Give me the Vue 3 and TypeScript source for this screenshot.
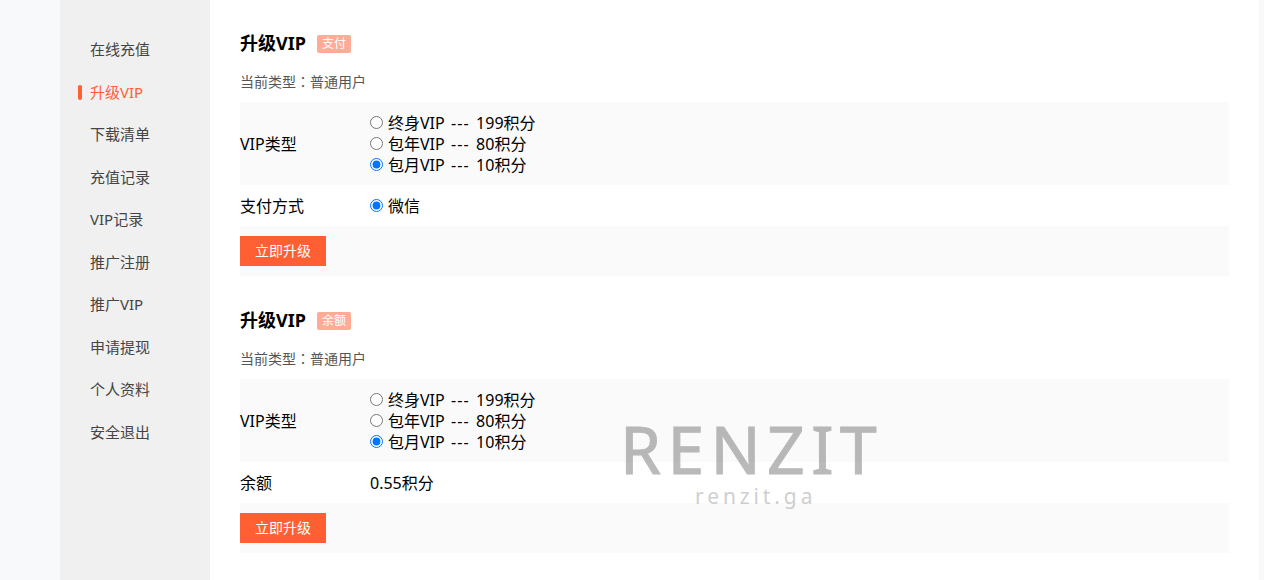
<template>
  <div class="page">
    <div class="wrap">
      <aside class="side">
        <a
          v-for="item in menu"
          :key="item"
          class="side-item"
          :class="{ active: item === current }"
        >{{ item }}</a>
      </aside>

      <main class="main">
        <section v-for="form in forms" :key="form.tag" class="block">
          <h2 class="title">升级VIP<span class="tag">{{ form.tag }}</span></h2>
          <p class="sub">当前类型<span class="colon">：</span>普通用户</p>

          <div class="row shade">
            <div class="label">VIP类型</div>
            <div class="value">
              <label v-for="plan in plans" :key="plan.name" class="radio">
                <input type="radio" :name="form.tag + 'plan'" :checked="plan.checked">{{ plan.name }} <span class="dash">---</span> {{ plan.price }}
              </label>
            </div>
          </div>

          <div class="row">
            <div class="label">{{ form.label }}</div>
            <div class="value">
              <label v-if="form.pay" class="radio">
                <input type="radio" :name="form.tag + 'pay'" checked>{{ form.pay }}
              </label>
              <span v-else>{{ form.balance }}</span>
            </div>
          </div>

          <div class="row shade action">
            <button class="btn" type="button">立即升级</button>
          </div>
        </section>
      </main>
    </div>

    <div class="mark">
      <div class="mark-big">RENZIT</div>
      <div class="mark-small">renzit.ga</div>
    </div>
  </div>
</template>

<script setup lang="ts">
const menu = ['在线充值', '升级VIP', '下载清单', '充值记录', 'VIP记录', '推广注册', '推广VIP', '申请提现', '个人资料', '安全退出']
const current = '升级VIP'

const plans = [
  { name: '终身VIP', price: '199积分', checked: false },
  { name: '包年VIP', price: '80积分', checked: false },
  { name: '包月VIP', price: '10积分', checked: true }
]

const forms = [
  { tag: '支付', label: '支付方式', pay: '微信', balance: '' },
  { tag: '余额', label: '余额', pay: '', balance: '0.55积分' }
]
</script>

<style>
html,
body {
  background: #f8f9fb;
}
</style>

<style scoped>
.page {
  position: relative;
  height: 580px;
  overflow: hidden;
  font-family: "Noto Sans", "Noto Sans CJK SC", sans-serif;
  color: #000;
}

.wrap {
  display: flex;
  width: 1199px;
  height: 580px;
  margin-left: 60px;
  background: #fff;
}

.side {
  width: 150px;
  padding-top: 28px;
  background: #f0f0f0;
  box-sizing: border-box;
}

.side-item {
  position: relative;
  display: block;
  height: 42.5px;
  padding-left: 30px;
  font-size: 15px;
  line-height: 42.5px;
  color: #444;
}

.side-item.active {
  color: #ff5f33;
}

.side-item.active::before {
  content: "";
  position: absolute;
  left: 18px;
  top: 14px;
  width: 4px;
  height: 15px;
  border-radius: 2px;
  background: #ff5f33;
}

.main {
  flex: 1;
  padding: 0 30px;
}

.block {
  height: 277px;
  padding-top: 29px;
  box-sizing: border-box;
}

.title {
  display: flex;
  align-items: center;
  height: 28px;
  margin: 0;
  font-size: 18px;
  font-weight: 700;
  line-height: 28px;
}

.tag {
  height: 18px;
  margin: 1px 0 0 11px;
  padding: 0 5px;
  border-radius: 2px;
  background: #ffab96;
  color: #fff;
  font-size: 12px;
  font-weight: 400;
  line-height: 18px;
}

.sub {
  margin: 15px 0 10px;
  font-size: 14px;
  line-height: 20px;
  color: #555;
}

.colon {
  font-family: "Noto Sans CJK TC", sans-serif;
  line-height: 0;
}

.row {
  display: flex;
  align-items: center;
  padding: 11px 0 9px;
  font-size: 16px;
  line-height: 21px;
}

.action {
  padding: 10px 0;
}

.shade {
  background: #fafafa;
}

.label {
  width: 130px;
}

.radio {
  display: block;
  word-spacing: 2px;
}

.dash {
  letter-spacing: 1.2px;
}

.radio input {
  width: 13px;
  height: 13px;
  margin: 0 5px 0 0;
}

.btn {
  display: block;
  width: 86px;
  height: 30px;
  padding: 0;
  border: 0;
  background: #ff5f33;
  color: #fff;
  font-family: inherit;
  font-size: 14px;
  line-height: 30px;
}

.mark {
  position: absolute;
  left: 620px;
  top: 411px;
  width: 270px;
  pointer-events: none;
}

.mark-big {
  font-family: "Noto Sans", sans-serif;
  font-size: 66px;
  line-height: 74px;
  letter-spacing: 6.4px;
  color: #828282;
  -webkit-text-stroke: 1px #828282;
  opacity: 0.55;
  white-space: nowrap;
}

.mark-small {
  margin: -1px 0 0 75px;
  font-family: "Noto Sans", sans-serif;
  font-size: 21px;
  line-height: 24px;
  letter-spacing: 3.9px;
  color: #969696;
  opacity: 0.45;
  white-space: nowrap;
}
</style>
